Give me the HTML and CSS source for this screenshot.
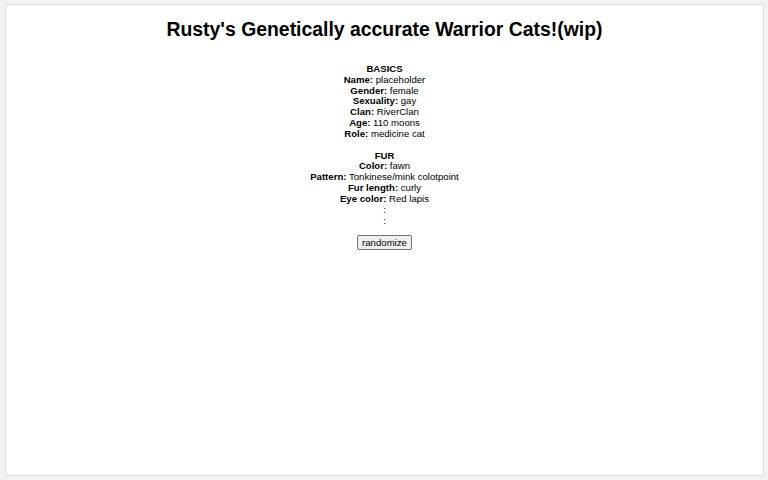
FILE: index.html
```html
<!DOCTYPE html>
<html>
<head>
<meta charset="utf-8">
<title>Rusty's Genetically accurate Warrior Cats!(wip)</title>
<link rel="stylesheet" href="styles.css">
</head>
<body>
<main class="sheet">
  <h1 class="title">Rusty's Genetically accurate Warrior Cats!(wip)</h1>
  <section class="stats">
    <div class="group">
      <b>BASICS</b><br>
      <b>Name:</b> placeholder<br>
      <b>Gender:</b> female<br>
      <b>Sexuality:</b> gay<br>
      <b>Clan:</b> RiverClan<br>
      <b>Age:</b> 110 moons<br>
      <b>Role:</b> medicine cat
    </div>
    <div class="group">
      <b>FUR</b><br>
      <b>Color:</b> fawn<br>
      <b>Pattern:</b> Tonkinese/mink colotpoint<br>
      <b>Fur length:</b> curly<br>
      <b>Eye color:</b> Red lapis<br>
      :<br>
      :
    </div>
    <button class="randomize" type="button">randomize</button>
  </section>
</main>
</body>
</html>
```
FILE: styles.css
```css
html, body {
  margin: 0;
  padding: 0;
  background: #f2f2f2;
  height: 100%;
}

body {
  padding: 4px 4px 4px 5px;
  box-sizing: border-box;
  font-family: "Liberation Sans", Arial, sans-serif;
  color: #000;
}

.sheet {
  box-sizing: border-box;
  height: 100%;
  background: #fff;
  border: 1px solid #dcdcdc;
  text-align: center;
}

.title {
  margin: 0;
  padding-top: 13px;
  font-size: 19.4px;
  line-height: 22px;
  font-weight: bold;
}

.stats {
  margin-top: 24px;
  font-size: 9.6px;
  line-height: 10.83px;
}

.group + .group {
  margin-top: 10.83px;
}

.randomize {
  margin-top: 9px;
  font-family: "Liberation Sans", Arial, sans-serif;
  font-size: 9.6px;
  padding: 1px 4px;
  background: #efefef;
  border: 1px solid #767676;
  border-radius: 2px;
  color: #000;
}
```
